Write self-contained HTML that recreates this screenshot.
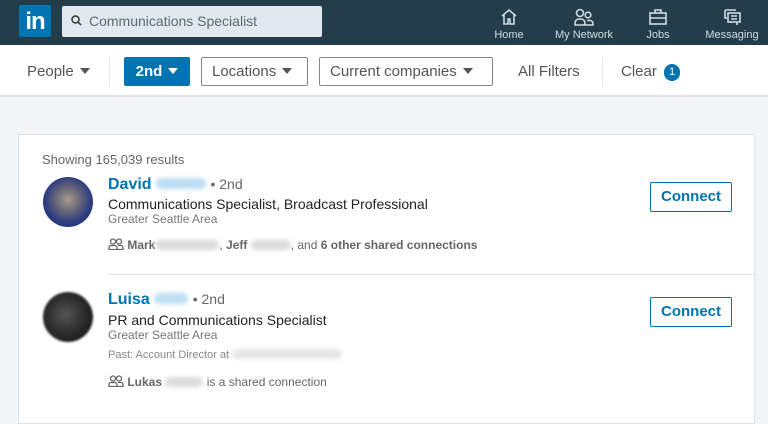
<!DOCTYPE html>
<html><head><style>
*{box-sizing:border-box;margin:0;padding:0}
body{width:768px;height:406px;overflow:hidden;background:#f3f6f8;font-family:"Liberation Sans",sans-serif;position:relative}
.hdr{position:absolute;left:0;top:0;width:768px;height:45px;background:#233e4a}
.logo{position:absolute;left:19px;top:5px;width:32px;height:32px;background:#0073b1;border-radius:2px;color:#fff;font-weight:bold;font-size:24px;line-height:34px;text-align:center;letter-spacing:-1px}
.search{position:absolute;left:62px;top:6px;width:260px;height:31px;background:#e1e9ee;border-radius:2px;font-size:14px;color:#5a6a73;line-height:31px;padding-left:27px}
.search svg{position:absolute;left:9px;top:9px}
.nav{position:absolute;top:7px;text-align:center;color:#d0dbe1;font-size:11px}
.nav svg{display:block;margin:0 auto 2px}
.fb{position:absolute;left:0;top:45px;width:768px;height:52px;background:#fff;border-bottom:2px solid #dfe3e6}
.f{position:absolute;top:12px;height:29px;font-size:15px;line-height:29px;color:#555}
.bx{border:1px solid #888;border-radius:2px;padding:0 10px;line-height:27px}
.tri{display:inline-block;width:0;height:0;border-left:5px solid transparent;border-right:5px solid transparent;border-top:6px solid #555;margin-left:6px;vertical-align:2px}
.sep{position:absolute;top:12px;width:1px;height:30px;background:#e6e9ec}
.card{position:absolute;left:18px;top:134px;width:737px;height:290px;background:#fff;border:1px solid #dde1e4;border-radius:2px}
.t{position:absolute;white-space:nowrap}
.name{color:#0073b1;font-size:16px;font-weight:bold}
.blur{display:inline-block;background:#bcdff3;height:11px;border-radius:5px;filter:blur(2px);vertical-align:0}
.gblur{display:inline-block;background:#dcdcdc;height:10px;border-radius:5px;filter:blur(2px);vertical-align:-1px}
.btn{position:absolute;left:631px;width:82px;height:30px;border:1px solid #0073b1;border-radius:2px;color:#0073b1;font-size:15px;font-weight:bold;text-align:center;line-height:28px}
.av{position:absolute;left:24px;width:50px;height:50px;border-radius:50%}
</style></head><body>
<div class="hdr">
<div class="logo">in</div>
<div class="search"><svg width="11" height="11" viewBox="0 0 11 11"><circle cx="4.5" cy="4.5" r="3.5" fill="none" stroke="#333" stroke-width="1.5"/><path d="M7 7l3 3" stroke="#333" stroke-width="1.5"/></svg>Communications Specialist</div>
<div class="nav" style="left:490px;width:38px"><svg width="20" height="20" viewBox="0 0 20 20" fill="none" stroke="#d0dbe1" stroke-width="1.6"><path d="M3 9l7-6 7 6M5 8v9h4v-5h2v5h4V8"/></svg>Home</div>
<div class="nav" style="left:548px;width:72px"><svg width="22" height="20" viewBox="0 0 22 20" fill="none" stroke="#d0dbe1" stroke-width="1.6"><circle cx="7" cy="6" r="3.5"/><circle cx="15" cy="8" r="2.8"/><path d="M2 18v-2a4 4 0 0 1 4-4h2a4 4 0 0 1 4 4v2zM12 18h8v-1.5a3 3 0 0 0-3-3h-3"/></svg>My Network</div>
<div class="nav" style="left:640px;width:36px"><svg width="20" height="20" viewBox="0 0 20 20" fill="none" stroke="#d0dbe1" stroke-width="1.6"><rect x="2" y="6" width="16" height="11"/><path d="M7 6V3h6v3M2 11h16"/></svg>Jobs</div>
<div class="nav" style="left:700px;width:64px"><svg width="20" height="20" viewBox="0 0 20 20" fill="none" stroke="#d0dbe1" stroke-width="1.6"><path d="M3 3h11M3 3v8h2"/><rect x="6" y="6" width="12" height="9"/><path d="M9 9h6M9 12h6M15 15v3"/></svg>Messaging</div>
</div>
<div class="fb">
<div class="f" style="left:27px">People<span class="tri"></span></div>
<div class="sep" style="left:109px"></div>
<div class="f" style="left:124px;width:66px;background:#0073b1;color:#fff;border-radius:2px;text-align:center;font-weight:bold">2nd<span class="tri" style="border-top-color:#fff"></span></div>
<div class="f bx" style="left:201px;width:107px">Locations<span class="tri"></span></div>
<div class="f bx" style="left:319px;width:174px">Current companies<span class="tri"></span></div>
<div class="f" style="left:518px">All Filters</div>
<div class="sep" style="left:602px"></div>
<div class="f" style="left:621px">Clear <span style="display:inline-block;width:16px;height:17px;border-radius:8px;background:#0073b1;color:#fff;font-size:11px;line-height:17px;text-align:center;vertical-align:1px;margin-left:3px">1</span></div>
</div>
<div class="card">
<div class="t" style="left:23px;top:17px;font-size:13px;color:#666">Showing 165,039 results</div>
<div class="av" style="top:42px;background:radial-gradient(circle at 50% 45%,#a89a90 0,#6d6a78 30%,#2f3f80 60%,#1d2a5a 100%)"></div>
<div class="t" style="left:89px;top:41px"><span class="name">David</span> <span class="blur" style="width:50px"></span> <span style="color:#666;font-size:14px">• 2nd</span></div>
<div class="t" style="left:89px;top:61px;font-size:14px;color:#222">Communications Specialist, Broadcast Professional</div>
<div class="t" style="left:89px;top:77px;font-size:12px;color:#777">Greater Seattle Area</div>
<div class="t" style="left:89px;top:103px;font-size:12px;color:#666"><svg width="16" height="12" viewBox="0 0 16 12" fill="none" stroke="#666" stroke-width="1.3" style="vertical-align:-1px"><circle cx="5" cy="3.5" r="2.5"/><circle cx="11" cy="3.5" r="2.5"/><path d="M1 11.5v-2a2 2 0 0 1 2-2h4a2 2 0 0 1 2 2v2zM9 11.5h6v-2a2 2 0 0 0-2-2h-3"/></svg> <b>Mark</b><span class="gblur" style="width:64px"></span>, <b>Jeff</b> <span class="gblur" style="width:40px"></span>, and <b>6 other shared connections</b></div>
<div class="btn" style="top:47px">Connect</div>
<div style="position:absolute;left:89px;right:0;top:139px;height:1px;background:#e6e9ec"></div>
<div class="av" style="top:157px;background:radial-gradient(circle at 45% 45%,#555 0,#333 40%,#1a1a1a 75%,#444 100%);filter:blur(1px)"></div>
<div class="t" style="left:89px;top:156px"><span class="name">Luisa</span> <span class="blur" style="width:34px"></span> <span style="color:#666;font-size:14px">• 2nd</span></div>
<div class="t" style="left:89px;top:177px;font-size:14px;color:#222">PR and Communications Specialist</div>
<div class="t" style="left:89px;top:193px;font-size:12px;color:#777">Greater Seattle Area</div>
<div class="t" style="left:89px;top:214px;font-size:11px;color:#888">Past: Account Director at <span class="gblur" style="width:110px;background:#e6e6e6"></span></div>
<div class="t" style="left:89px;top:240px;font-size:12px;color:#666"><svg width="16" height="12" viewBox="0 0 16 12" fill="none" stroke="#666" stroke-width="1.3" style="vertical-align:-1px"><circle cx="5" cy="3.5" r="2.5"/><circle cx="11" cy="3.5" r="2.5"/><path d="M1 11.5v-2a2 2 0 0 1 2-2h4a2 2 0 0 1 2 2v2zM9 11.5h6v-2a2 2 0 0 0-2-2h-3"/></svg> <b>Lukas</b> <span class="gblur" style="width:38px"></span> is a shared connection</div>
<div class="btn" style="top:162px">Connect</div>
</div>
</body></html>
